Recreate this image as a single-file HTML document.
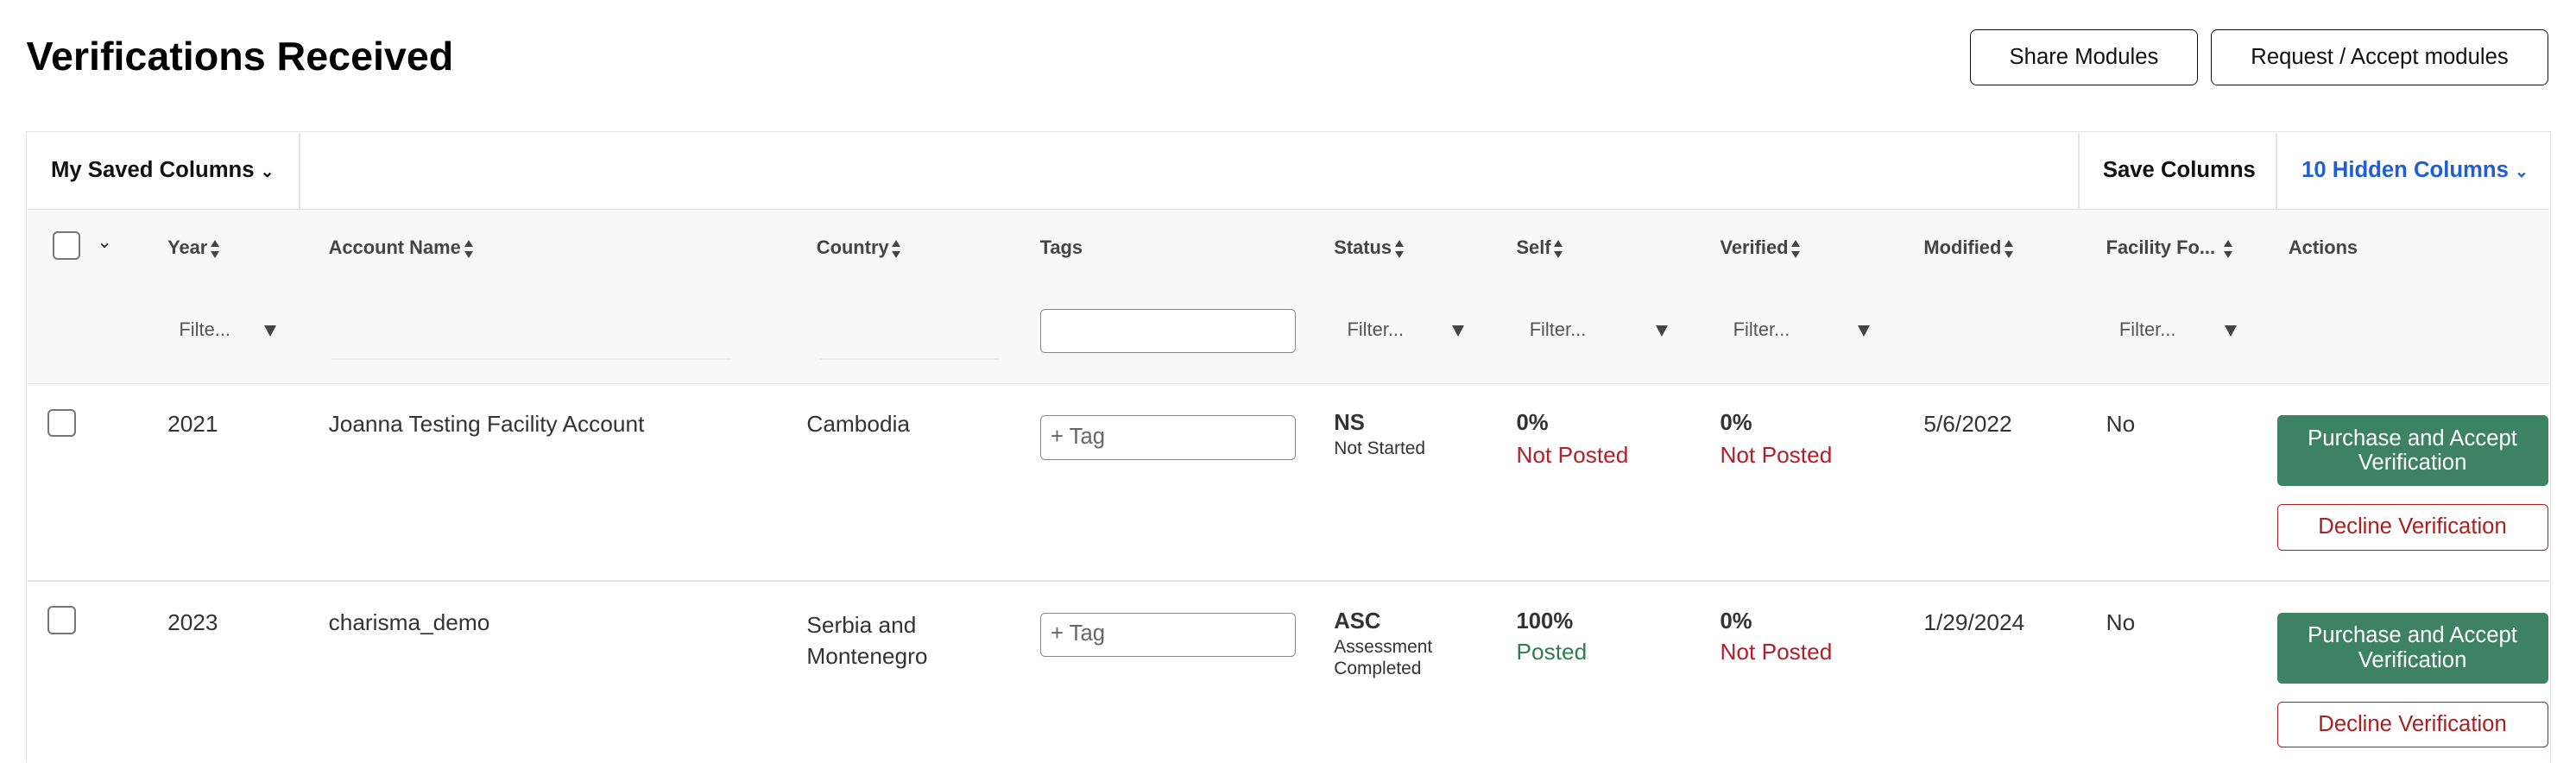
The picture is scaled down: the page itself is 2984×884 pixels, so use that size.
<!DOCTYPE html>
<html><head><meta charset="utf-8"><style>
html,body{margin:0;padding:0;background:#fff;}
body{width:2984px;height:884px;overflow:hidden;}
#r{zoom:1.903;position:relative;width:1568px;height:464px;overflow:hidden;font-family:"Liberation Sans",sans-serif;color:#333;}
.a{position:absolute;white-space:nowrap;}
.t{font-size:24.5px;font-weight:bold;color:#000;left:16px;top:20px;letter-spacing:0px;}
.btn{position:absolute;border:1px solid #111;border-radius:4px;font-size:13.5px;color:#111;display:flex;align-items:center;justify-content:center;box-sizing:border-box;}
.box{position:absolute;left:16px;top:80px;width:1537px;height:384px;border:1px solid #e2e2e2;border-bottom:none;box-sizing:border-box;}
.hd{position:absolute;left:17px;top:127px;width:1535px;height:106px;background:#f8f8f8;border-top:1px solid #e2e2e2;border-bottom:1px solid #e2e2e2;}
.h{font-size:11.5px;font-weight:bold;color:#444;top:144px;}
.s{display:inline-block;vertical-align:middle;margin-left:2px;width:6px;height:11px;position:relative;}
.s:before{content:"";position:absolute;left:0;top:0;border-left:3px solid transparent;border-right:3px solid transparent;border-bottom:4.5px solid #444;}
.s:after{content:"";position:absolute;left:0;bottom:0;border-left:3px solid transparent;border-right:3px solid transparent;border-top:4.5px solid #444;}
.f{font-size:11.5px;color:#555;top:194px;}
.tri{position:absolute;top:198px;border-left:4px solid transparent;border-right:4px solid transparent;border-top:7px solid #444;}
.cb{position:absolute;width:17px;height:17px;border:1.5px solid #777;border-radius:3px;box-sizing:border-box;background:#fff;}
.d{font-size:13.8px;color:#333;}
.tag{position:absolute;left:633px;width:156px;height:27px;border:1px solid #888;border-radius:3px;box-sizing:border-box;font-size:13.5px;color:#666;padding:5px 6px;background:#fff;}
.g{position:absolute;left:1386px;width:165px;height:43px;background:#3d8262;border-radius:3px;color:#fff;font-size:13.5px;text-align:center;line-height:15px;display:flex;align-items:center;justify-content:center;}
.dv{position:absolute;left:1386px;width:165px;height:28px;border:1px solid #a81f1f;border-radius:3px;color:#a81f1f;font-size:13.5px;display:flex;align-items:center;justify-content:center;box-sizing:border-box;}
.red{color:#b0202a;}.grn{color:#2e7d4f;}
</style></head><body><div id="r">
<div class="a t">Verifications Received</div>
<div class="btn" style="left:1199px;top:18px;width:139px;height:34px;">Share Modules</div>
<div class="btn" style="left:1346px;top:18px;width:205px;height:34px;">Request / Accept modules</div>
<div class="box"></div>
<div class="a" style="left:182px;top:81px;width:1px;height:46px;background:#e6e6e6"></div>
<div class="a" style="left:1265px;top:81px;width:1px;height:46px;background:#e6e6e6"></div>
<div class="a" style="left:1385px;top:81px;width:1px;height:46px;background:#e6e6e6"></div>
<div class="a" style="left:31px;top:96px;font-size:13.5px;font-weight:bold;color:#111">My Saved Columns <span style="font-size:10px">&#8964;</span></div>
<div class="a" style="left:1280px;top:96px;font-size:13.5px;font-weight:bold;color:#111">Save Columns</div>
<div class="a" style="left:1401px;top:96px;font-size:13.5px;font-weight:bold;color:#1f5fd1">10 Hidden Columns <span style="font-size:10px">&#8964;</span></div>
<div class="hd"></div>
<div class="cb" style="left:32px;top:141px;"></div>
<div class="a" style="left:59px;top:141px;font-size:11px;color:#222">&#8964;</div>
<div class="a h" style="left:102px">Year<span class="s"></span></div>
<div class="a h" style="left:200px">Account Name<span class="s"></span></div>
<div class="a h" style="left:497px">Country<span class="s"></span></div>
<div class="a h" style="left:633px">Tags</div>
<div class="a h" style="left:812px">Status<span class="s"></span></div>
<div class="a h" style="left:923px">Self<span class="s"></span></div>
<div class="a h" style="left:1047px">Verified<span class="s"></span></div>
<div class="a h" style="left:1171px">Modified<span class="s"></span></div>
<div class="a h" style="left:1282px">Facility Fo... <span class="s"></span></div>
<div class="a h" style="left:1393px">Actions</div>
<div class="a f" style="left:109px">Filte...</div><div class="tri" style="left:161px"></div>
<div class="a" style="left:202px;top:218px;width:243px;height:1px;background:#e8e8e8"></div>
<div class="a" style="left:499px;top:218px;width:109px;height:1px;background:#e8e8e8"></div>
<div class="tag" style="top:188px;"></div>
<div class="a f" style="left:820px">Filter...</div><div class="tri" style="left:884px"></div>
<div class="a f" style="left:931px">Filter...</div><div class="tri" style="left:1008px"></div>
<div class="a f" style="left:1055px">Filter...</div><div class="tri" style="left:1131px"></div>
<div class="a f" style="left:1290px">Filter...</div><div class="tri" style="left:1354px"></div>

<div class="cb" style="left:29px;top:249px;"></div>
<div class="a d" style="left:102px;top:250px">2021</div>
<div class="a d" style="left:200px;top:250px">Joanna Testing Facility Account</div>
<div class="a d" style="left:491px;top:250px">Cambodia</div>
<div class="tag" style="top:253px;">+ Tag</div>
<div class="a" style="left:812px;top:250px;font-size:13.5px;font-weight:bold">NS</div>
<div class="a" style="left:812px;top:267px;font-size:11px;color:#333">Not Started</div>
<div class="a" style="left:923px;top:250px;font-size:13.5px;font-weight:bold">0%</div>
<div class="a d red" style="left:923px;top:269px">Not Posted</div>
<div class="a" style="left:1047px;top:250px;font-size:13.5px;font-weight:bold">0%</div>
<div class="a d red" style="left:1047px;top:269px">Not Posted</div>
<div class="a d" style="left:1171px;top:250px">5/6/2022</div>
<div class="a d" style="left:1282px;top:250px">No</div>
<div class="g" style="top:253px">Purchase and Accept<br>Verification</div>
<div class="dv" style="top:307px">Decline Verification</div>
<div class="a" style="left:17px;top:353px;width:1535px;height:1px;background:#e6e6e6"></div>

<div class="cb" style="left:29px;top:369px;"></div>
<div class="a d" style="left:102px;top:371px">2023</div>
<div class="a d" style="left:200px;top:371px">charisma_demo</div>
<div class="a d" style="left:491px;top:371px;line-height:19px;white-space:normal;width:100px">Serbia and Montenegro</div>
<div class="tag" style="top:373px;">+ Tag</div>
<div class="a" style="left:812px;top:371px;font-size:13.5px;font-weight:bold">ASC</div>
<div class="a" style="left:812px;top:388px;font-size:11px;color:#333;line-height:13px">Assessment<br>Completed</div>
<div class="a" style="left:923px;top:371px;font-size:13.5px;font-weight:bold">100%</div>
<div class="a d grn" style="left:923px;top:389px">Posted</div>
<div class="a" style="left:1047px;top:371px;font-size:13.5px;font-weight:bold">0%</div>
<div class="a d red" style="left:1047px;top:389px">Not Posted</div>
<div class="a d" style="left:1171px;top:371px">1/29/2024</div>
<div class="a d" style="left:1282px;top:371px">No</div>
<div class="g" style="top:373px">Purchase and Accept<br>Verification</div>
<div class="dv" style="top:427px">Decline Verification</div>
</div></body></html>
